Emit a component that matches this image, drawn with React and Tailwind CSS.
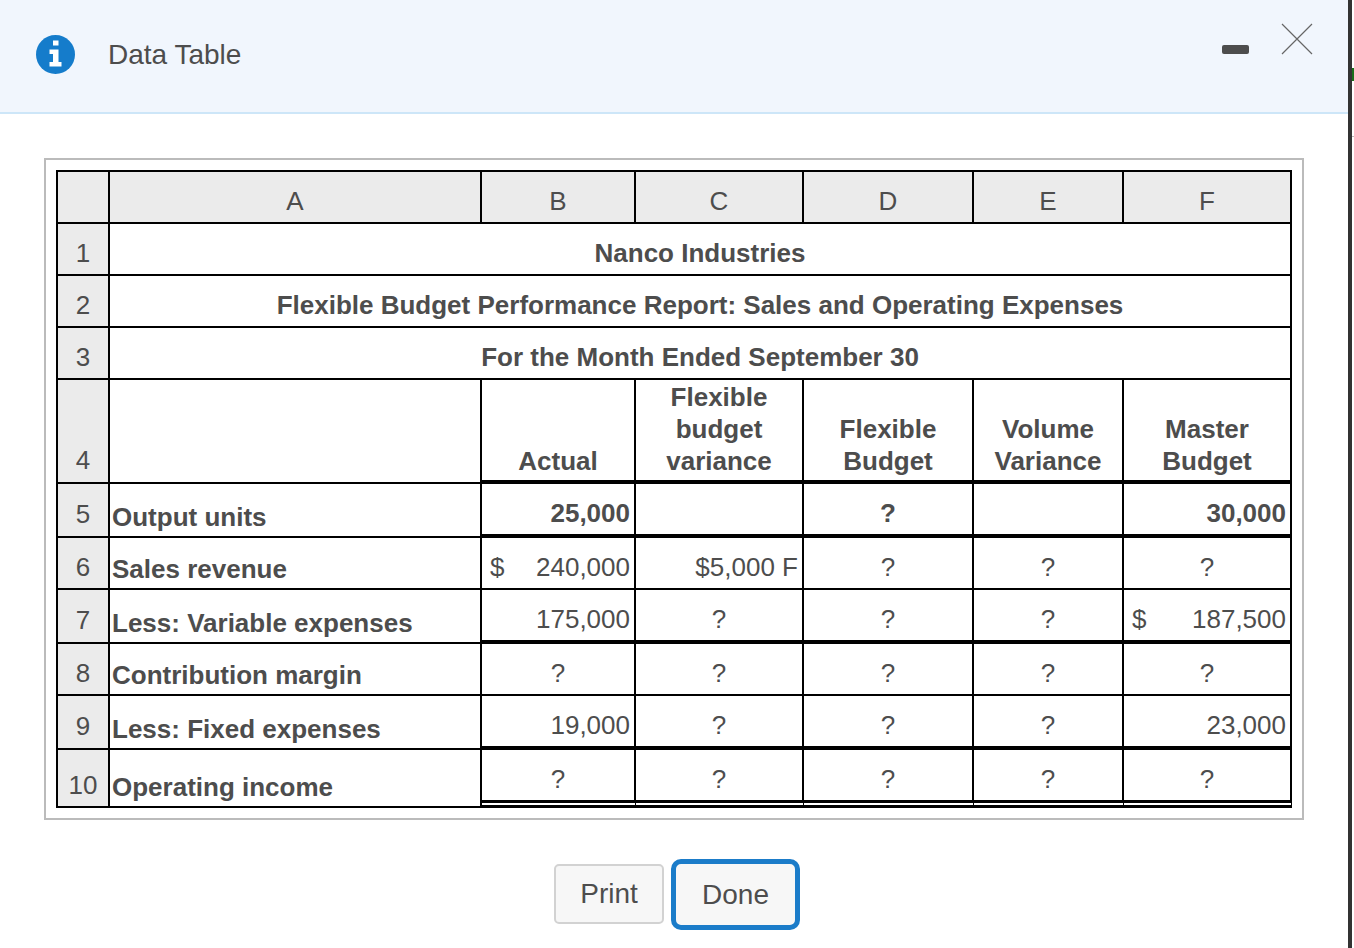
const FONT = "font-['Liberation_Sans',Arial,sans-serif]"

const rows = [
  { n: '5', label: 'Output units', h: 'h-[54px]', thick: true, bold: true, cells: ['25,000', '', '?', '', '30,000'] },
  { n: '6', label: 'Sales revenue', h: 'h-[52px]', cells: [{ d: '240,000' }, '$5,000 F', '?', '?', '?'] },
  { n: '7', label: 'Less: Variable expenses', h: 'h-[54px]', thick: true, cells: ['175,000', '?', '?', '?', { d: '187,500' }] },
  { n: '8', label: 'Contribution margin', h: 'h-[52px]', cells: ['?', '?', '?', '?', '?'] },
  { n: '9', label: 'Less: Fixed expenses', h: 'h-[54px]', thick: true, cells: ['19,000', '?', '?', '?', '23,000'] },
  { n: '10', label: 'Operating income', h: 'h-[58px]', last: true, cells: ['?', '?', '?', '?', '?'] },
]

function RowNum({ children, className = '' }) {
  return (
    <div className={`bg-[#ebebeb] border-r-2 border-b-2 border-black flex justify-center ${className}`}>
      {children}
    </div>
  )
}

function DataCell({ value, row }) {
  const base = 'border-r-2 border-black flex items-center pt-[8px]'
  const bottom = row.last
    ? 'border-b-[8px] [border-bottom-style:double]'
    : row.thick ? 'border-b-4' : 'border-b-2'
  const weight = row.bold ? 'font-bold' : ''

  if (typeof value === 'object') {
    return (
      <div className={`${base} ${bottom} ${weight} justify-between pl-[8px] pr-1`}>
        <span>$</span>
        <span>{value.d}</span>
      </div>
    )
  }
  const align = value === '?' ? 'justify-center' : 'justify-end pr-1'
  return <div className={`${base} ${bottom} ${weight} ${align}`}>{value}</div>
}

export default function App() {
  return (
    <div className={`w-[1354px] h-[948px] flex bg-white text-[#4d4d4d] overflow-hidden ${FONT}`}>
      <div className="w-[1348px] flex flex-col">
        <div className="h-[114px] shrink-0 bg-[#f1f6fd] border-b-2 border-[#cde6f8] flex items-center pl-[36px] pr-[35px]">
          <svg width="39" height="39" viewBox="0 0 39 39" className="shrink-0 -mt-[4px]">
            <circle cx="19.5" cy="19.5" r="19.5" fill="#157ccb" />
            <path d="M17 5.5h5.5v5H17zM13.5 14.5h9v12.5h3v4.5H13.5V27h3.5v-8h-3.5z" fill="#fff" />
          </svg>
          <span className="ml-[33px] text-[28px] -mt-[2px]">Data Table</span>
          <div className="ml-auto flex items-start -mt-[10px]">
            <div className="w-[27px] h-[9px] bg-[#4d4d4d] rounded-[2px] -mt-[3px]" />
            <svg width="32" height="32" viewBox="0 0 32 32" className="ml-[32px] -mt-[25px]">
              <path d="M1 1l30 30M31 1L1 31" stroke="#666" strokeWidth="1.2" fill="none" />
            </svg>
          </div>
        </div>

        <div className="ml-[44px] mt-[44px] w-[1260px] h-[662px] border-2 border-[#bbbbbb] p-[10px]">
          <div className="w-[1236px] border-l-2 border-t-2 border-black grid grid-cols-[52px_372px_154px_168px_170px_150px_168px] text-[26px] leading-[32px]">
            <RowNum className="h-[52px]" />
            {['A', 'B', 'C', 'D', 'E', 'F'].map((c) => (
              <div key={c} className="bg-[#ebebeb] border-r-2 border-b-2 border-black flex items-center justify-center pt-[7px]">{c}</div>
            ))}

            {['Nanco Industries', 'Flexible Budget Performance Report: Sales and Operating Expenses', 'For the Month Ended September 30'].map((title, i) => (
              <div key={title} className="contents">
                <RowNum className="h-[52px] items-center pt-[8px]">{i + 1}</RowNum>
                <div className="col-span-6 border-r-2 border-b-2 border-black flex items-center justify-center font-bold pt-[8px]">{title}</div>
              </div>
            ))}

            <RowNum className="h-[104px] items-end pb-[6px]">4</RowNum>
            <div className="border-r-2 border-b-2 border-black" />
            {[['Actual'], ['Flexible', 'budget', 'variance'], ['Flexible', 'Budget'], ['Volume', 'Variance'], ['Master', 'Budget']].map((lines, i) => (
              <div key={i} className="border-r-2 border-b-4 border-black flex flex-col justify-end items-center font-bold pb-[3px]">
                {lines.map((line) => <span key={line}>{line}</span>)}
              </div>
            ))}

            {rows.map((row) => (
              <div key={row.n} className="contents">
                <RowNum className={`${row.h} ${row.last ? 'items-end pb-[5px]' : 'items-center pt-[8px]'}`}>{row.n}</RowNum>
                <div className="border-r-2 border-b-2 border-black flex items-end pl-[2px] pb-[3px] font-bold">{row.label}</div>
                {row.cells.map((value, i) => <DataCell key={i} value={value} row={row} />)}
              </div>
            ))}
          </div>
        </div>

        <div className="mt-[39px] ml-[554px] flex items-start gap-[7px] text-[28px]">
          <button className="mt-[5px] w-[110px] h-[60px] bg-[#f7f7f7] border-2 border-[#d2d2d2] rounded-[5px]">Print</button>
          <button className="w-[129px] h-[71px] bg-[#f7f7f7] border-[5px] border-[#1b7cc9] rounded-[10px]">Done</button>
        </div>
      </div>

      <div className="w-[4px] bg-[#333333]" />
      <div className="w-[2px] flex flex-col">
        <div className="mt-[68px] h-[13px] bg-[#1a6e1a]" />
        <div className="mt-[55px] h-px bg-[#bbbbbb]" />
      </div>
    </div>
  )
}
